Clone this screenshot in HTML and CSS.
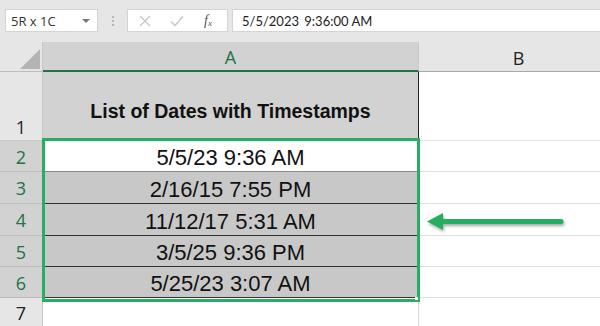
FILE: index.html
```html
<!DOCTYPE html>
<html>
<head>
<meta charset="utf-8">
<link rel="stylesheet" href="styles.css">
</head>
<body>
<div class="app">
  <div class="toolbar">
    <div class="namebox"><span>5R x 1C</span><span class="caret"></span></div>
    <div class="grip"><i></i><i></i><i></i></div>
    <div class="fxbox">
      <svg class="ico" width="14" height="14" viewBox="0 0 14 14"><path d="M2 2L12 12M12 2L2 12" stroke="#c8c8c8" stroke-width="1.4" fill="none"/></svg>
      <svg class="ico" width="16" height="14" viewBox="0 0 16 14"><path d="M2 7.5L6 11.5L14 2.5" stroke="#c8c8c8" stroke-width="1.5" fill="none"/></svg>
      <span class="fx">f<sub>x</sub></span>
    </div>
    <div class="formula">5/5/2023 <span class="gap"></span>9:36:00 AM</div>
  </div>
  <div class="sheet">
    <div class="corner"><span class="tri"></span></div>
    <div class="colhead sel">A</div>
    <div class="colhead">B</div>

    <div class="rowhead r1">1</div>
    <div class="cell title">List of Dates with Timestamps</div>
    <div class="bcell r1"></div>

    <div class="rowhead sel">2</div>
    <div class="cell date active">5/5/23 9:36 AM</div>
    <div class="bcell"></div>

    <div class="rowhead sel">3</div>
    <div class="cell date">2/16/15 7:55 PM</div>
    <div class="bcell"></div>

    <div class="rowhead sel">4</div>
    <div class="cell date">11/12/17 5:31 AM</div>
    <div class="bcell"></div>

    <div class="rowhead sel">5</div>
    <div class="cell date">3/5/25 9:36 PM</div>
    <div class="bcell"></div>

    <div class="rowhead sel">6</div>
    <div class="cell date last">5/25/23 3:07 AM</div>
    <div class="bcell"></div>

    <div class="rowhead r7">7</div>
    <div class="cell empty"></div>
    <div class="bcell"></div>

    <div class="selection"><span class="handle"></span></div>
    <svg class="arrow" width="150" height="30" viewBox="0 0 150 30">
      <defs>
        <filter id="sh" x="-10%" y="-50%" width="120%" height="200%">
          <feDropShadow dx="1" dy="2" stdDeviation="1.5" flood-color="#000" flood-opacity="0.35"/>
        </filter>
      </defs>
      <g filter="url(#sh)">
        <path d="M16 13.5H136" stroke="#27ae60" stroke-width="5" stroke-linecap="round" fill="none"/>
        <path d="M2 13.5L18 5V22Z" fill="#27ae60"/>
      </g>
    </svg>
  </div>
</div>
</body>
</html>
```

FILE: styles.css
```css
* { box-sizing: border-box; }
html, body { margin: 0; padding: 0; }
body { width: 600px; height: 326px; overflow: hidden; background: #fff; font-family: "Liberation Sans", Arial, sans-serif; }
.app { width: 600px; height: 326px; display: flex; flex-direction: column; overflow: hidden; }

.toolbar {
  height: 42px; flex: none; background: #e6e6e6; display: flex; align-items: flex-start;
  padding: 9px 0 0 5px; gap: 0;
}
.namebox {
  width: 93px; height: 23px; background: #fff; border: 1px solid #d4d4d4;
  display: flex; align-items: center; justify-content: space-between;
  padding: 0 7px 0 5px; font-family: "Open Sans", sans-serif; font-size: 13px; color: #333;
}
.caret { width: 0; height: 0; border-left: 4px solid transparent; border-right: 4px solid transparent; border-top: 4px solid #777; }
.grip { width: 29px; height: 23px; display: flex; flex-direction: column; align-items: center; justify-content: center; gap: 2px; }
.grip i { width: 2px; height: 2px; background: #b5b5b5; display: block; }
.fxbox {
  width: 101px; height: 23px; background: #fff; border: 1px solid #d4d4d4;
  display: flex; align-items: center; padding: 0 0 0 10px;
}
.fxbox .ico { display: block; }
.fxbox .ico:first-child { margin-right: 17px; }
.fxbox .ico:nth-child(2) { margin-right: 19px; }
.fx { font-family: "Liberation Serif", serif; font-style: italic; font-size: 14px; color: #555; line-height: 1; }
.fx sub { font-size: 9px; vertical-align: -1px; }
.formula {
  margin-left: 4px; flex: 1; height: 23px; background: #fff; border: 1px solid #d4d4d4; border-right: none;
  font-family: "Lato", sans-serif; font-size: 13px; color: #222; padding: 3px 0 0 9px;
}
.gap { display: inline-block; width: 2px; }

.sheet {
  position: relative; flex: none; height: 284px;
  display: grid; grid-template-columns: 43px 376px 200px;
  grid-template-rows: 30px 69px 31px 32px 32px 31px 31px 30px;
  background: #fff;
}
.corner { background: #e6e6e6; border-right: 1px solid #c6c6c6; border-bottom: 1px solid #bdbdbd; position: relative; }
.tri { position: absolute; right: 2px; bottom: 2px; width: 0; height: 0; border-left: 20px solid transparent; border-bottom: 20px solid #b4b4b4; }
.colhead {
  background: #e6e6e6; border-bottom: 1px solid #a8a8a8; border-right: 1px solid #c8c8c8;
  display: flex; align-items: center; justify-content: center;
  font-family: "Open Sans", sans-serif; font-size: 18px; color: #222; padding-top: 2px;
}
.colhead.sel { background: #d2d2d2; color: #217346; border-bottom: 2px solid #217346; }
.rowhead {
  background: #e6e6e6; border-right: 1px solid #c6c6c6; border-bottom: 1px solid #c6c6c6;
  display: flex; align-items: center; justify-content: center;
  font-family: "Open Sans", sans-serif; font-size: 18px; color: #222; padding-top: 3px; line-height: 1.2;
}
.rowhead.sel { background: #d2d2d2; color: #217346; border-bottom-color: #bcbcbc; }
.rowhead.r1 { align-items: flex-end; padding-bottom: 1px; }
.cell {
  border-right: 1px solid #222; border-bottom: 1px solid #333;
  display: flex; align-items: center; justify-content: center; color: #111;
}
.title { background: #d2d2d2; font-weight: bold; font-size: 19.5px; padding-top: 10px; }
.date { background: #c8c8c8; font-size: 22px; padding-top: 4px; }
.date.active { background: #fff; border-bottom-color: #888; }
.cell.empty { background: #fff; border: none; border-right: 1px solid #dadada; }
.bcell { border-bottom: 1px solid #e0e0e0; }
.bcell.r1 { border-bottom-color: #e6e6e6; }

.selection {
  position: absolute; left: 42px; top: 96px; width: 378px; height: 164px;
  border: 3px solid #27ae60; pointer-events: none;
}
.handle { position: absolute; right: -1px; bottom: -1px; width: 3px; height: 3px; background: #fff; }
.arrow { position: absolute; left: 425px; top: 166px; }
```
